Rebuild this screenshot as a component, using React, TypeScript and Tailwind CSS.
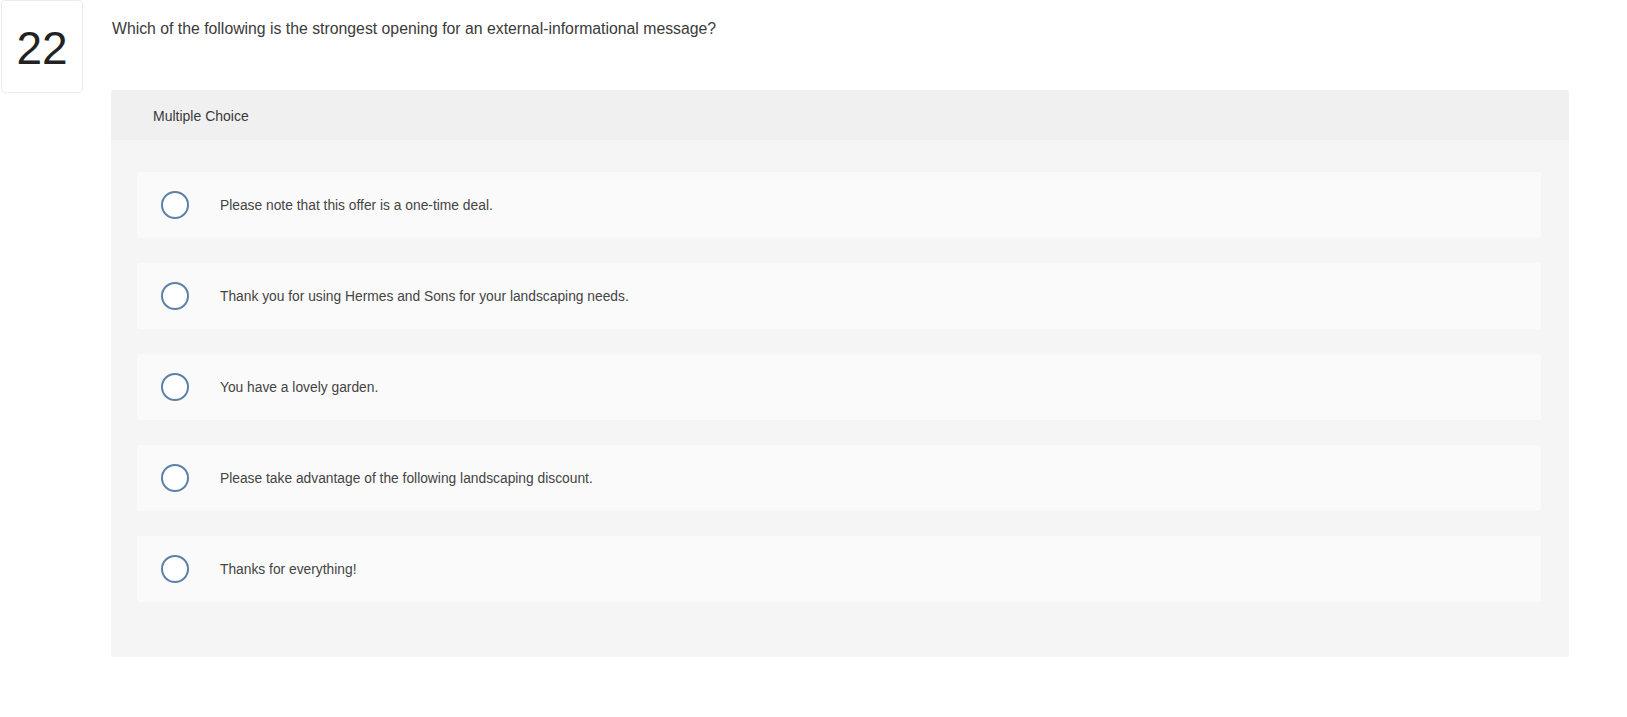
import React from "react";

const options = [
  "Please note that this offer is a one-time deal.",
  "Thank you for using Hermes and Sons for your landscaping needs.",
  "You have a lovely garden.",
  "Please take advantage of the following landscaping discount.",
  "Thanks for everything!",
];

export default function App() {
  return (
    <div
      className="w-[1627px] h-[717px] bg-white flex items-start"
      style={{ fontFamily: '"Liberation Sans", Arial, sans-serif' }}
    >
      <div className="ml-[1px] w-[82px] h-[93px] border border-[#ececec] rounded-[4px] flex items-center justify-center shrink-0">
        <span className="text-[46px] leading-none text-[#222] pt-[2px]">22</span>
      </div>
      <div className="ml-[28px] w-[1458px] flex flex-col">
        <div className="pt-[20px] pl-[1px] text-[15.8px] leading-[18px] text-[#3a3a3a] h-[90px]">
          Which of the following is the strongest opening for an external-informational message?
        </div>
        <div className="bg-[#f5f5f5] rounded-[3px] flex flex-col">
          <div className="bg-[#f0f0f0] h-[50px] flex items-center pl-[42px] pt-[2px] text-[14px] text-[#3a3a3a] rounded-t-[3px]">
            Multiple Choice
          </div>
          <div className="flex flex-col gap-[25px] pt-[32px] pb-[55px] pl-[26px] pr-[28px]">
            {options.map((o) => (
              <div
                key={o}
                className="h-[66px] bg-[#fafafa] rounded-[3px] flex items-center pl-[24px]"
              >
                <span className="w-[28px] h-[28px] rounded-full border-2 border-[#5b81a8] bg-white shrink-0" />
                <span className="ml-[31px] pt-[2px] text-[13.8px] text-[#444]">{o}</span>
              </div>
            ))}
          </div>
        </div>
      </div>
    </div>
  );
}
